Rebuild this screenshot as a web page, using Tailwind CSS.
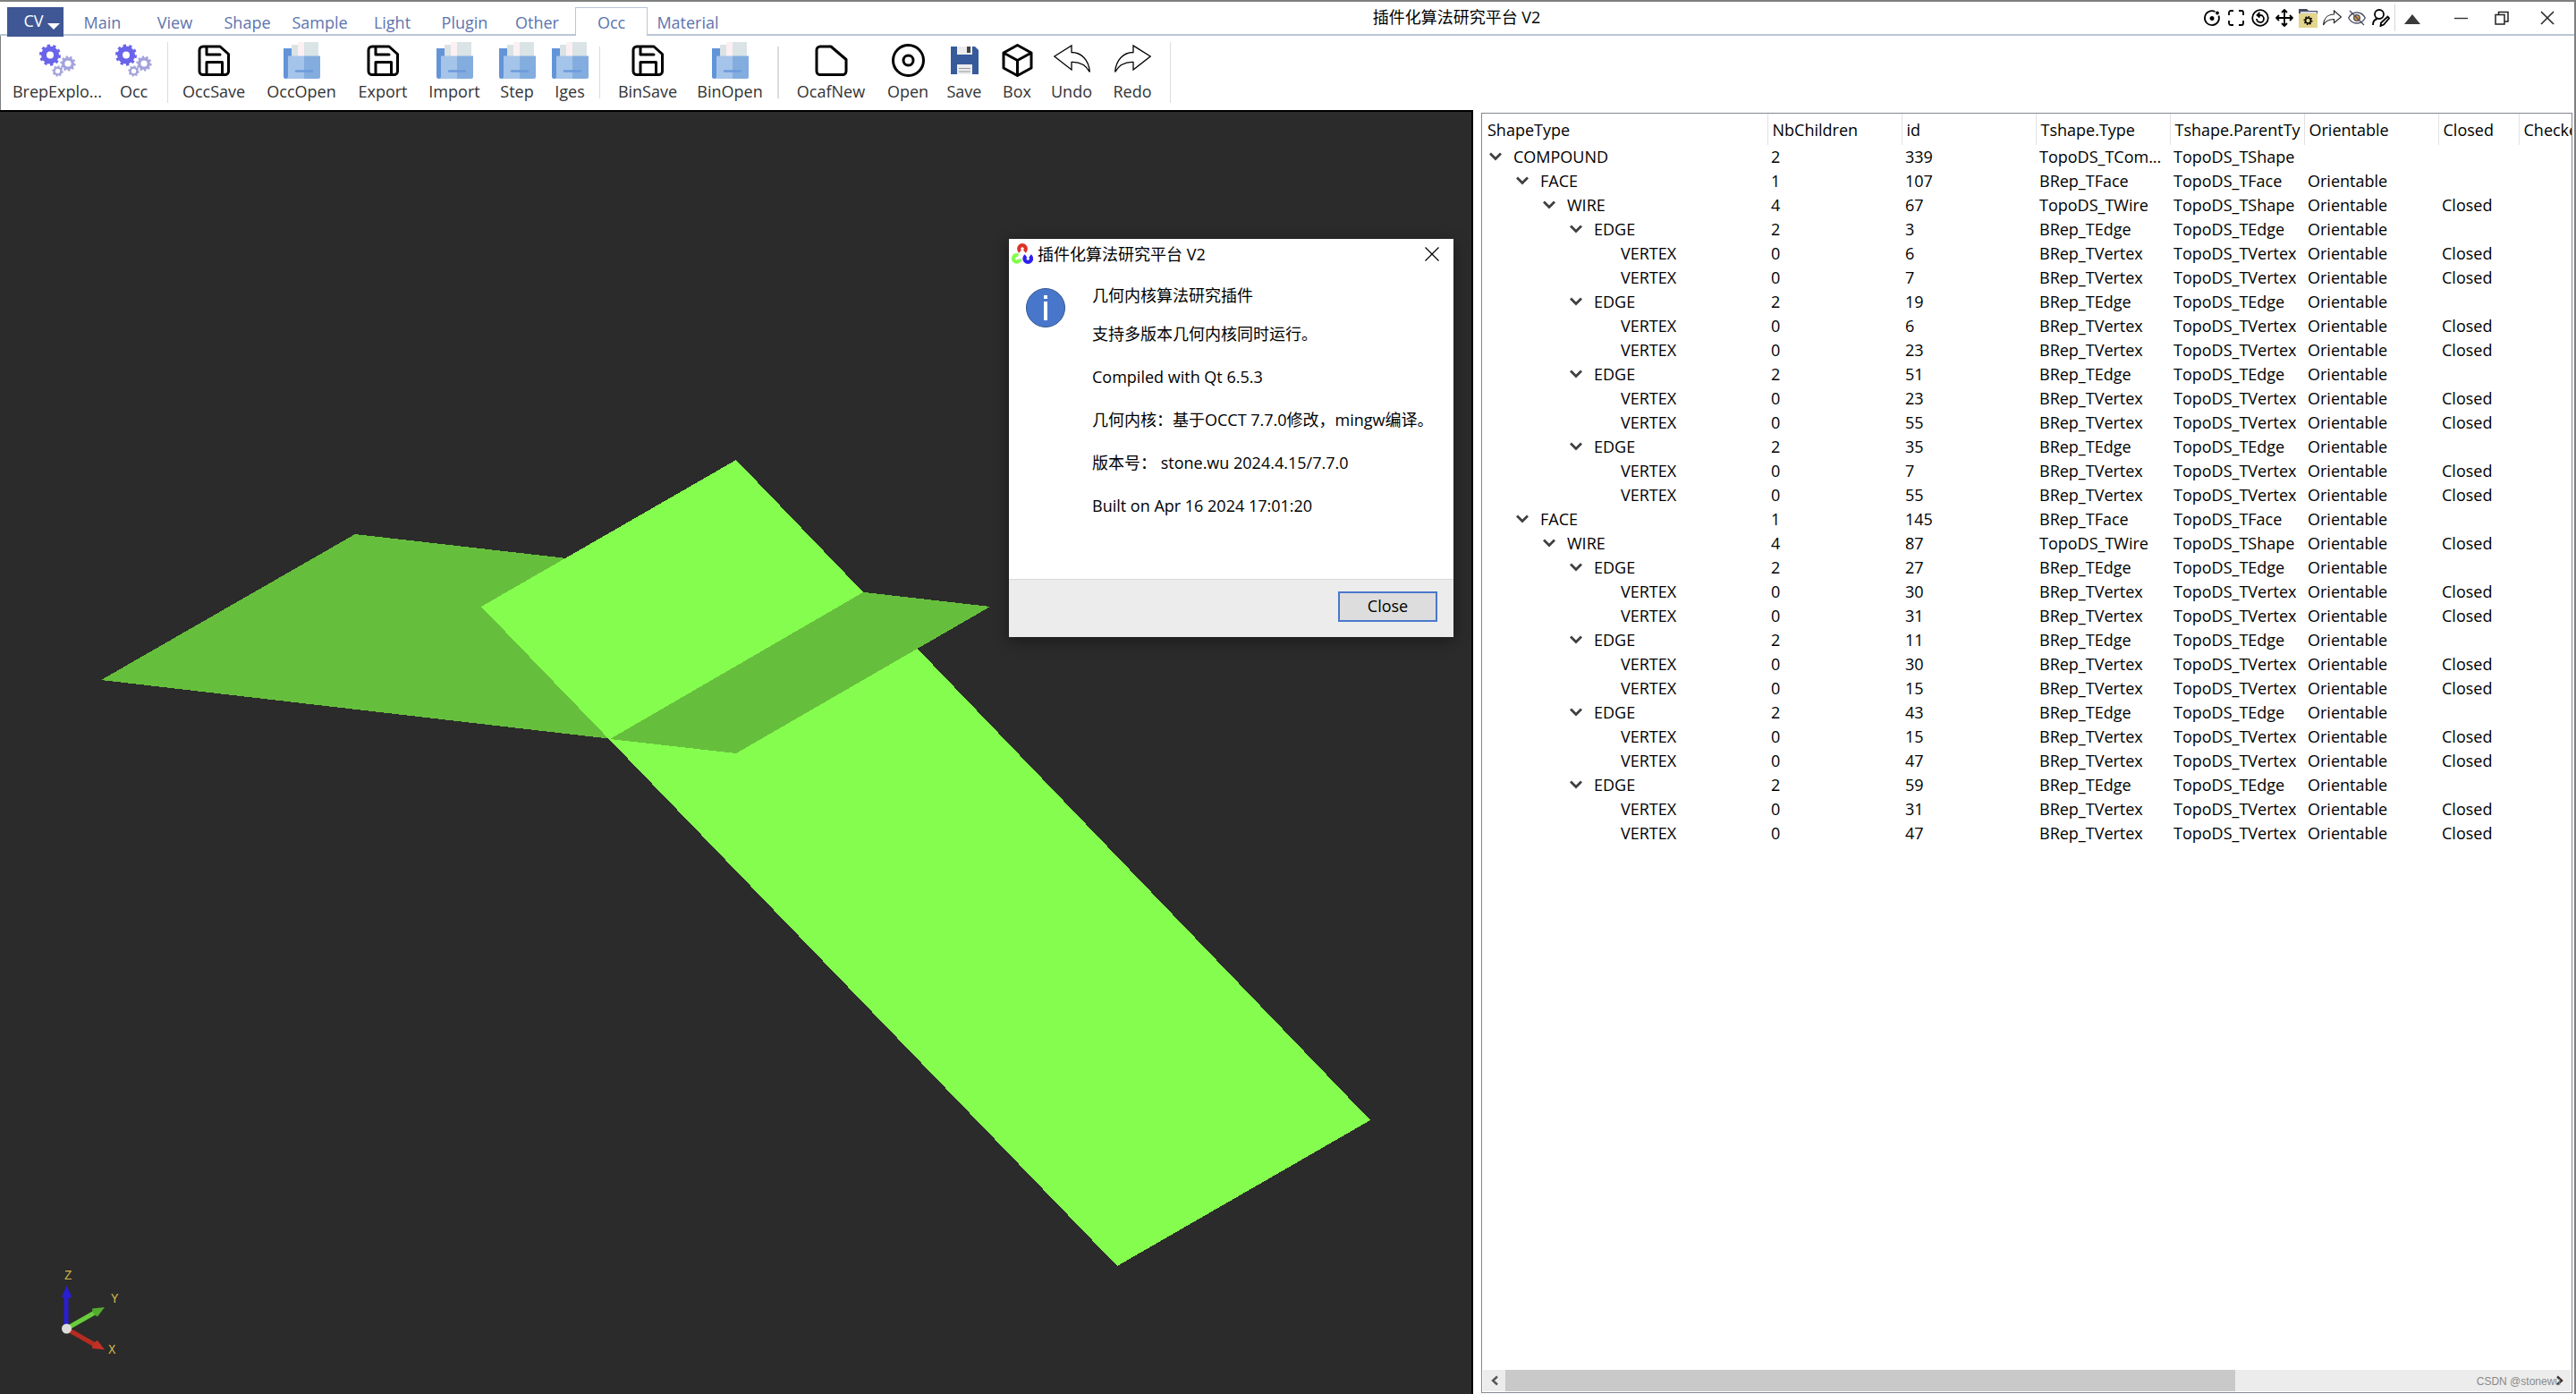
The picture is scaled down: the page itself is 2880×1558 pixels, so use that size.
<!doctype html>
<html lang="zh-CN">
<head>
    <meta charset="UTF-8"/>
    <meta name="viewport" content="width=device-width, initial-scale=1.0"/>
    <title>插件化算法研究平台 V2</title>
    <script src="https://cdn.jsdelivr.net/npm/@tailwindcss/browser@4"></script>
</head>
<body class="h-screen flex flex-col overflow-hidden bg-white text-black text-[18px] leading-6 font-['Open_Sans','Noto_Sans_CJK_SC',sans-serif] border-t-2 border-r-2 border-[#808080]">

<!-- shared icons -->
<svg class="hidden" aria-hidden="true">
    <symbol id="gears" viewBox="0 0 41 41" fill="none">
        <g stroke="#6a64ea">
            <circle cx="12" cy="14.5" r="7" stroke-width="6"/>
            <circle cx="12" cy="14.5" r="10.5" stroke-width="3" pathLength="20" stroke-dasharray="1 1"/>
        </g>
        <g stroke="#a2a2dc">
            <circle cx="32" cy="24" r="5.3" stroke-width="3.4"/>
            <circle cx="32" cy="24" r="7.6" stroke-width="2" pathLength="20" stroke-dasharray="1 1"/>
            <circle cx="20.5" cy="32.5" r="3.9" stroke-width="2.4"/>
            <circle cx="20.5" cy="32.5" r="5.4" stroke-width="1.6" pathLength="16" stroke-dasharray="1 1"/>
        </g>
    </symbol>
    <symbol id="floppy" viewBox="0 0 41 41" fill="none" stroke="#000" stroke-width="3" stroke-linecap="round" stroke-linejoin="round">
        <path d="M8 5H27L36.500 13.500V32.500a4 4 0 0 1-4 4H8a4 4 0 0 1-4-4V9a4 4 0 0 1 4-4zM12 5V14H27M12 36V22.500H29.500V36"/>
    </symbol>
    <symbol id="folder" viewBox="0 0 41 41">
        <path d="M0 7H10V41H2.500A2.500 2.500 0 0 1 0 38.500z" fill="#6394d8"/>
        <path d="M9 3H16V16H9z" fill="#dae2e5"/>
        <path d="M16 0H23V16H16z" fill="#fcf0f2"/>
        <path d="M23 0H39V16H23z" fill="#dae3e5"/>
        <path d="M5 15.500H23V41H3C4.500 40.500 5 39.500 5 38z" fill="#a5c4e9"/>
        <path d="M23 15.500H41V39a2 2 0 0 1-2 2H23z" fill="#83addf"/>
        <path d="M14 32.500H32" stroke="#6c9bdb" stroke-width="2.400" stroke-linecap="round"/>
    </symbol>
    <symbol id="chevron" viewBox="0 0 16 10">
        <path d="M2 1.500L8 7.500L14 1.500" fill="none" stroke="#404040" stroke-width="2.800"/>
    </symbol>
</svg>

<header>
    <div class="flex h-[38px] pl-2 border-b-2 border-[#b9c6d6]">
        <button class="relative h-[33px] w-[63px] mt-[6px] mr-[3px] bg-[#405795] text-white pr-1 pb-1">CV
            <svg class="absolute right-1 bottom-2 w-[14px] h-[7px]" viewBox="0 0 14 7"><path d="M0 0H14L7 7z" fill="#fff"/></svg>
        </button>
        <nav class="flex pt-[6px] text-[#5d74ae]">
            <button class="w-[81px] pt-[3px]">Main</button>
            <button class="w-[81px] pt-[3px]">View</button>
            <button class="w-[81px] pt-[3px]">Shape</button>
            <button class="w-[81px] pt-[3px]">Sample</button>
            <button class="w-[81px] pt-[3px]">Light</button>
            <button class="w-[81px] pt-[3px]">Plugin</button>
            <button class="w-[81px] pt-[3px]">Other</button>
            <button class="w-[81px] h-8 ml-[2px] pt-px bg-white border border-b-0 border-[#b9c6d6]">Occ</button>
            <button class="w-[90px] pt-[3px]">Material</button>
        </nav>
        <h1 class="flex-1 text-center pt-[5px] pr-4">插件化算法研究平台 V2</h1>
        <div class="flex items-center">
            <button class="w-[27px] flex justify-center" aria-label="Rotate">
                <svg class="w-5 h-5" viewBox="0 0 20 20" fill="none" stroke="#000" stroke-width="1.800"><path d="M13.500 3A8 8 0 1 0 17.500 7.500"/><circle cx="10" cy="10.500" r="1.600" fill="#000"/><circle cx="16" cy="4.500" r="1" fill="#000"/></svg>
            </button>
            <button class="w-[27px] flex justify-center" aria-label="Fit all">
                <svg class="w-5 h-5" viewBox="0 0 20 20" fill="none" stroke="#000" stroke-width="1.800"><path d="M2 7V4a2 2 0 0 1 2-2H7M13 2H16a2 2 0 0 1 2 2V7M18 13V16a2 2 0 0 1-2 2H13M7 18H4a2 2 0 0 1-2-2V13"/></svg>
            </button>
            <button class="w-[27px] flex justify-center" aria-label="Reset">
                <svg class="w-5 h-5" viewBox="0 0 20 20" fill="none" stroke="#000" stroke-width="1.800"><circle cx="10" cy="10" r="8.800"/><path d="M7 7H10.500A4 4 0 1 1 6 11M9.500 4L6.500 7L9.500 9.500"/></svg>
            </button>
            <button class="w-[27px] flex justify-center" aria-label="Pan">
                <svg class="w-5 h-5" viewBox="0 0 20 20" fill="none" stroke="#000" stroke-width="1.800"><path d="M10 1V19M1 10H19M7 4L10 1L13 4M7 16L10 19L13 16M4 7L1 10L4 13M16 7L19 10L16 13"/></svg>
            </button>
            <button class="w-[27px] flex justify-center" aria-label="Folder settings">
                <svg class="w-[21px] h-[21px]" viewBox="0 0 21 21"><path d="M0 0H9L11 2H21V8H0z" fill="#474b60"/><path d="M2 3H20V8H2z" fill="#d8dbe4"/><path d="M0 5H21V21H0z" fill="#e3d58b"/><circle cx="10.500" cy="13" r="3" fill="none" stroke="#000" stroke-width="1.600"/><circle cx="10.500" cy="13" r="4.300" fill="none" stroke="#000" stroke-width="1.400" pathLength="16" stroke-dasharray="1 1"/></svg>
            </button>
            <button class="w-[27px] flex justify-center" aria-label="Forward">
                <svg class="w-[21px] h-[18px]" viewBox="0 0 21 18" fill="none" stroke="#222" stroke-width="1.100"><path d="M12.500 1L20.500 8L12.500 14.500V10.500C7 10.500 3 12 .5 17C1 10 5 5 12.500 5z"/></svg>
            </button>
            <button class="w-[27px] flex justify-center" aria-label="Hide">
                <svg class="w-5 h-5" viewBox="0 0 20 20" fill="none" stroke="#474b60" stroke-width="1.300"><path d="M.7 10C5 2 15 2 19.300 10C15 18 5 18 .7 10z"/><circle cx="10" cy="10" r="3.300" fill="#e09a35"/><path d="M2 2L18 18"/></svg>
            </button>
            <button class="w-[27px] flex justify-center" aria-label="Edit user">
                <svg class="w-5 h-5" viewBox="0 0 20 20" fill="none" stroke="#000" stroke-width="1.800"><circle cx="8" cy="6" r="5"/><path d="M1 18C1 14 3 11.500 6 11M17.500 8.500L19 10.500L13 17.500L9.500 19L10 15.500z"/></svg>
            </button>
            <span class="w-px h-[30px] ml-[2px] bg-[#d6d6d6]"></span>
            <button class="w-[38px] flex justify-center" aria-label="Collapse ribbon">
                <svg class="w-[18px] h-[11px] mt-[3px]" viewBox="0 0 18 11"><path d="M9 0L18 11H0z" fill="#3a3a3a"/></svg>
            </button>
            <button class="w-[49px] ml-[11px] flex justify-center" aria-label="Minimize">
                <svg class="w-4 h-4" viewBox="0 0 16 16"><path d="M0 8.500H15" stroke="#333" stroke-width="1.400"/></svg>
            </button>
            <button class="w-[41px] flex justify-center" aria-label="Restore">
                <svg class="w-4 h-4" viewBox="0 0 16 16" fill="none" stroke="#222" stroke-width="1.500"><path d="M1 4.500H11V15H1zM4.500 4V1.500H15V12H11.500"/></svg>
            </button>
            <button class="w-[61px] flex justify-center" aria-label="Close window">
                <svg class="w-4 h-4" viewBox="0 0 16 16" stroke="#222" stroke-width="1.500"><path d="M1 1L15 15M15 1L1 15"/></svg>
            </button>
        </div>
    </div>

    <div class="flex h-[83px] pt-[7px] pl-3 text-[#333] border-l border-[#808080]">
        <button class="w-[102px] flex flex-col items-center gap-[2px]"><svg class="w-[41px] h-[41px]"><use href="#gears"/></svg>BrepExplo...</button>
        <button class="w-[69px] flex flex-col items-center gap-[2px]"><svg class="w-[41px] h-[41px]"><use href="#gears"/></svg>Occ</button>
        <span class="w-px h-[68px] ml-[3px] mr-[2px] bg-[#dcdcdc]"></span>
        <button class="w-[98px] flex flex-col items-center gap-[2px]"><svg class="w-[41px] h-[41px]"><use href="#floppy"/></svg>OccSave</button>
        <button class="w-[98px] flex flex-col items-center gap-[2px]"><svg class="w-[41px] h-[41px]"><use href="#folder"/></svg>OccOpen</button>
        <button class="w-[84px] flex flex-col items-center gap-[2px]"><svg class="w-[41px] h-[41px]"><use href="#floppy"/></svg>Export</button>
        <button class="w-[76px] flex flex-col items-center gap-[2px]"><svg class="w-[41px] h-[41px]"><use href="#folder"/></svg>Import</button>
        <button class="w-[64px] flex flex-col items-center gap-[2px]"><svg class="w-[41px] h-[41px]"><use href="#folder"/></svg>Step</button>
        <button class="w-[54px] flex flex-col items-center gap-[2px]"><svg class="w-[41px] h-[41px]"><use href="#folder"/></svg>Iges</button>
        <span class="w-px h-[58px] mt-[5px] ml-[6px] mr-2 bg-[#dcdcdc]"></span>
        <button class="w-[90px] flex flex-col items-center gap-[2px]"><svg class="w-[41px] h-[41px]"><use href="#floppy"/></svg>BinSave</button>
        <button class="w-[94px] flex flex-col items-center gap-[2px]"><svg class="w-[41px] h-[41px]"><use href="#folder"/></svg>BinOpen</button>
        <span class="w-[2px] h-[58px] mt-[5px] ml-[6px] mr-[11px] bg-[#dcdcdc]"></span>
        <button class="w-[94px] flex flex-col items-center gap-[2px]">
            <svg class="w-[41px] h-[41px]" viewBox="0 0 41 41" fill="none" stroke="#000" stroke-width="3" stroke-linejoin="round"><path d="M8 5H20L37 19.500V32.500a4 4 0 0 1-4 4H8a4 4 0 0 1-4-4V9a4 4 0 0 1 4-4z"/></svg>OcafNew
        </button>
        <button class="w-[78px] flex flex-col items-center gap-[2px]">
            <svg class="w-[41px] h-[41px]" viewBox="0 0 41 41" fill="none" stroke="#000" stroke-width="3"><circle cx="20.500" cy="20.500" r="17"/><circle cx="20.500" cy="20.500" r="5.500"/></svg>Open
        </button>
        <button class="w-[48px] flex flex-col items-center gap-[2px]">
            <svg class="w-[41px] h-[41px]" viewBox="0 0 41 41"><path d="M5 5H32L36 9V36H5z" fill="#375a9b"/><path d="M12 5H29V14H12zM12 25H29V36H12z" fill="#ececee"/><path d="M23 5H27V12H23z" fill="#444"/><path d="M14 29.500H27M14 33H27" stroke="#999"/></svg>Save
        </button>
        <button class="w-[70px] flex flex-col items-center gap-[2px]">
            <svg class="w-[41px] h-[41px]" viewBox="0 0 41 41" fill="none" stroke="#000" stroke-width="3" stroke-linejoin="round"><path d="M20.500 3.500L36 12V29L20.500 37.500L5 29V12zM5 12L20.500 20.500L36 12M20.500 20.500V37.500"/></svg>Box
        </button>
        <button class="w-[52px] flex flex-col items-center gap-[2px]">
            <svg class="w-[41px] h-[41px]" viewBox="0 0 41 41" fill="none" stroke="#000" stroke-width="1.300"><path d="M.8 16L20 4V11.500C31 11.500 39.500 20 40.300 33.500C36 26 29 22 20 22.500V31z"/></svg>Undo
        </button>
        <button class="w-[84px] flex flex-col items-center gap-[2px]">
            <svg class="w-[41px] h-[41px]" viewBox="0 0 41 41" fill="none" stroke="#000" stroke-width="1.300"><path d="M40.200 16L21 4V11.500C10 11.500 1.500 20 .7 33.500C5 26 12 22 21 22.500V31z"/></svg>Redo
        </button>
        <span class="w-px h-[68px] bg-[#dcdcdc]"></span>
    </div>
</header>

<main class="flex-1 min-h-0 grid grid-cols-[1647fr_1231fr]">
    <section class="relative min-w-0 min-h-0 overflow-hidden bg-[#2b2b2b] border-t-2 border-r-2 border-black">
        <svg class="w-full h-full" viewBox="0 125 1645 1433" preserveAspectRatio="xMinYMin slice">
            <g shape-rendering="crispEdges">
                <path d="M113 760L397 597L1107 678L823 842z" fill="#66bf3c"/>
                <path d="M823 514L1532 1252L1249 1415L538 678z" fill="#85fd4f"/>
                <path d="M682 826L965 662L1107 678L823 842z" fill="#66bf3c"/>
            </g>
            <path d="M74 1485V1448" stroke="#2a1fd0" stroke-width="5"/>
            <path d="M74.500 1437L80.500 1449.500Q74.500 1453 69 1449.500z" fill="#2a1fd0"/>
            <path d="M76 1484L106 1467" stroke="#68cc3c" stroke-width="5"/>
            <path d="M117 1461L103 1462.500Q103 1469 109 1471.500z" fill="#55ab30"/>
            <path d="M76 1486L106 1503" stroke="#b52c20" stroke-width="5"/>
            <path d="M117 1508.500L109 1498Q103 1501 103 1507z" fill="#c23024"/>
            <circle cx="74.500" cy="1485" r="5.500" fill="#dcdcdc"/>
            <g class="font-['Liberation_Mono',monospace] text-[14px]" fill="#d2b54c">
                <text x="72" y="1430">Z</text>
                <text x="124" y="1456">Y</text>
                <text x="121" y="1513">X</text>
            </g>
        </svg>

        <div role="dialog" aria-labelledby="aboutTitle" class="absolute left-[1128px] top-[142px] w-[497px] h-[445px] flex flex-col bg-white shadow-[0_4px_16px_rgba(0,0,0,0.4)]">
            <div class="flex items-center h-[34px] pl-[3px] pr-4">
                <svg class="w-6 h-6" viewBox="0 0 24 24" fill="none" stroke-width="4.200">
                    <path d="M9.700 9A3.800 3.800 0 1 1 14.300 9" stroke="#dd3328"/>
                    <path d="M7.500 13.500A3.800 3.800 0 1 0 9.500 17.500" stroke="#85fd4f"/>
                    <path d="M16 14A3.800 3.800 0 1 0 20.500 14" stroke="#2c1fee"/>
                </svg>
                <h2 id="aboutTitle" class="flex-1 pl-[5px]">插件化算法研究平台 V2</h2>
                <button aria-label="Close dialog">
                    <svg class="w-4 h-4" viewBox="0 0 16 16" stroke="#000" stroke-width="1.200"><path d="M.5 .5L15.500 15.500M15.500 .5L.5 15.500"/></svg>
                </button>
            </div>
            <div class="flex-1 flex gap-[30px] pt-[17px] pl-[19px]">
                <svg class="w-11 h-11 mt-1" viewBox="0 0 44 44">
                    <circle cx="22" cy="22" r="21.500" fill="#4876cb" stroke="#34588f"/>
                    <path d="M20 8H24V12H20zM20 15H24V36H20z" fill="#fff"/>
                </svg>
                <div class="whitespace-nowrap">
                    <h3 class="mb-[19px]">几何内核算法研究插件</h3>
                    <div class="flex flex-col gap-6">
                        <p>支持多版本几何内核同时运行。</p>
                        <p>Compiled with Qt 6.5.3</p>
                        <p>几何内核：基于OCCT 7.7.0修改，mingw编译。</p>
                        <p>版本号： stone.wu 2024.4.15/7.7.0</p>
                        <p>Built on Apr 16 2024 17:01:20</p>
                    </div>
                </div>
            </div>
            <div class="flex justify-end items-start h-[65px] pt-[13px] pr-[18px] bg-[#ececec] border-t border-[#dadada]">
                <button class="w-[111px] h-[34px] pb-[2px] bg-[#dddddd] border-2 border-[#4a78cc]">Close</button>
            </div>
        </div>
    </section>

    <section class="min-w-0 min-h-0 pt-[3px] pl-[9px] pr-[2px] pb-px">
        <div class="relative h-full flex flex-col border border-[#828790]">
            <div class="flex-1 min-h-0 overflow-hidden">
                <table class="w-full table-fixed text-left whitespace-nowrap">
                    <colgroup>
                        <col class="w-[319px]"/>
                        <col class="w-[150px]"/>
                        <col class="w-[150px]"/>
                        <col class="w-[150px]"/>
                        <col class="w-[150px]"/>
                        <col class="w-[150px]"/>
                        <col class="w-[90px]"/>
                        <col/>
                    </colgroup>
                    <thead>
                    <tr class="h-[35px]">
                        <th class="font-normal pl-[6px] border-r border-[#e2e2e2]">ShapeType</th>
                        <th class="font-normal pl-[5px] border-r border-[#e2e2e2]">NbChildren</th>
                        <th class="font-normal pl-[5px] border-r border-[#e2e2e2]">id</th>
                        <th class="font-normal pl-[5px] border-r border-[#e2e2e2]">Tshape.Type</th>
                        <th class="font-normal pl-[5px] border-r border-[#e2e2e2]">Tshape.ParentTy</th>
                        <th class="font-normal pl-[5px] border-r border-[#e2e2e2]">Orientable</th>
                        <th class="font-normal pl-[5px] border-r border-[#e2e2e2]">Closed</th>
                        <th class="font-normal pl-[5px] overflow-hidden">Checked</th>
                    </tr>
                    </thead>
                    <tbody id="shapeTree"></tbody>
                </table>
            </div>
            <div class="flex h-6 mx-px mb-px bg-[#ececec]">
                <button class="w-[25px] flex items-center justify-center" aria-label="Scroll left">
                    <svg class="w-2 h-3" viewBox="0 0 8 12" fill="none" stroke="#555" stroke-width="2.400"><path d="M7 1.500L2 6L7 10.500"/></svg>
                </button>
                <div class="flex-1"><div class="h-full w-[70%] bg-[#c9c9c9]"></div></div>
                <button class="w-[25px] flex items-center justify-center" aria-label="Scroll right">
                    <svg class="w-2 h-3" viewBox="0 0 8 12" fill="none" stroke="#333" stroke-width="2.400"><path d="M1 1.500L6 6L1 10.500"/></svg>
                </button>
            </div>
            <span class="absolute right-3 bottom-0 text-[12px] text-[#8a8a8a] font-['Liberation_Sans',sans-serif]">CSDN @stonewu</span>
        </div>
    </section>
</main>

<script>
    // level, children, id
    const rows = [
        [0, 2, 339],
        [1, 1, 107],
        [2, 4, 67],
        [3, 2, 3], [4, 0, 6], [4, 0, 7],
        [3, 2, 19], [4, 0, 6], [4, 0, 23],
        [3, 2, 51], [4, 0, 23], [4, 0, 55],
        [3, 2, 35], [4, 0, 7], [4, 0, 55],
        [1, 1, 145],
        [2, 4, 87],
        [3, 2, 27], [4, 0, 30], [4, 0, 31],
        [3, 2, 11], [4, 0, 30], [4, 0, 15],
        [3, 2, 43], [4, 0, 15], [4, 0, 47],
        [3, 2, 59], [4, 0, 31], [4, 0, 47],
    ];
    // name, type, parent type, orientable, closed
    const kinds = [
        ['COMPOUND', 'TopoDS_TCom...', 'TopoDS_TShape', '', ''],
        ['FACE', 'BRep_TFace', 'TopoDS_TFace', 'Orientable', ''],
        ['WIRE', 'TopoDS_TWire', 'TopoDS_TShape', 'Orientable', 'Closed'],
        ['EDGE', 'BRep_TEdge', 'TopoDS_TEdge', 'Orientable', ''],
        ['VERTEX', 'BRep_TVertex', 'TopoDS_TVertex', 'Orientable', 'Closed'],
    ];
    const indent = ['pl-0', 'pl-[30px]', 'pl-[60px]', 'pl-[90px]', 'pl-[120px]'];

    document.getElementById('shapeTree').innerHTML = rows.map(([level, children, id]) => {
        const [name, ...cells] = kinds[level];
        const arrow = children ? '<svg class="w-4 h-[10px]"><use href="#chevron"/></svg>' : '';
        return `<tr class="h-[27px]">
            <td class="${indent[level]} pb-[2px]"><div class="flex items-center"><span class="w-[30px] flex justify-center">${arrow}</span><span class="pl-[5px]">${name}</span></div></td>
            ${[children, id, ...cells].map(c => `<td class="pl-1 pb-[2px]">${c}</td>`).join('')}
        </tr>`;
    }).join('');
</script>
</body>
</html>
